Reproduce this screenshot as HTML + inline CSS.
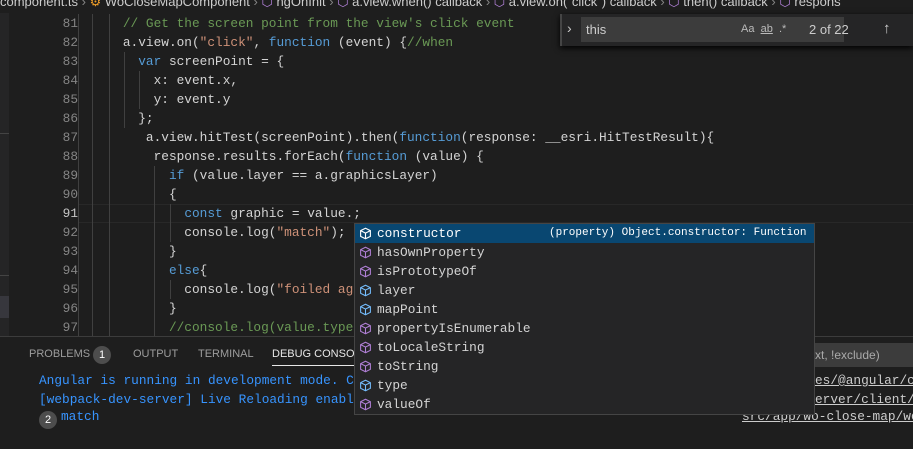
<!DOCTYPE html>
<html><head><meta charset="utf-8"><style>
*{margin:0;padding:0;box-sizing:border-box}
body{width:913px;height:449px;background:#1e1e1e;overflow:hidden;position:relative;font-family:"Liberation Sans",sans-serif;color:#d4d4d4}
.mono{font-family:"Liberation Mono",monospace;font-size:12.8px}
.a{position:absolute;white-space:pre}
.ln{position:absolute;left:38px;width:40px;text-align:right;color:#858585;font-family:"Liberation Mono",monospace;font-size:12.8px;line-height:19px}
.code{position:absolute;left:0;top:14px}
.code div{height:19px;line-height:19px;white-space:pre;font-family:"Liberation Mono",monospace;font-size:12.8px;color:#d4d4d4}
.k{color:#569cd6}.s{color:#ce9178}.c{color:#6a9955}.f{color:#dcdcaa}
.g{position:absolute;width:1px;background:#404040}
.sug{position:absolute;left:354px;top:223px;width:461px;height:192px;background:#252526;border:1px solid #454545}
.sug div{height:19px;line-height:19px;position:relative;padding-left:22px;font-family:"Liberation Mono",monospace;font-size:12.8px;color:#d4d4d4;white-space:nowrap}
.sug div.sel{background:#094771;color:#fff}
.ic{position:absolute;left:4px;top:3px;width:13px;height:13px}
</style></head><body>
<div class="a" style="left:0;top:0;width:913px;height:13px;background:#1e1e1e"></div>
<div class="a" style="left:0;top:-6px;font-size:13px;color:#ccc;">component.ts <span style="color:#888">›</span> <span style="color:#ee9d28">⚙</span> WoCloseMapComponent <span style="color:#888">›</span> <span style="color:#b180d7">⬡</span> ngOnInit <span style="color:#888">›</span> <span style="color:#b180d7">⬡</span> a.view.when() callback <span style="color:#888">›</span> <span style="color:#b180d7">⬡</span> a.view.on("click") callback <span style="color:#888">›</span> <span style="color:#b180d7">⬡</span> then() callback <span style="color:#888">›</span> <span style="color:#b180d7">⬡</span> respons</div>
<div class="a" style="left:0;top:13px;width:9px;height:323px;background:#252526"></div>
<div class="a" style="left:0;top:133px;width:9px;height:1px;background:#444"></div>
<div class="a" style="left:0;top:275px;width:9px;height:1px;background:#444"></div>
<div class="a" style="left:0;top:296px;width:9px;height:22px;background:#37373d"></div>
<div class="ln" style="top:14px">81<br>82<br>83<br>84<br>85<br>86<br>87<br>88<br>89<br>90<br><span style="color:#c6c6c6">91</span><br>92<br>93<br>94<br>95<br>96<br>97</div>
<div class="a" style="left:78px;top:204px;width:835px;height:19px;border-top:1px solid #282828;border-bottom:1px solid #282828"></div>
<div class="g" style="left:78px;top:14px;height:322px"></div>
<div class="g" style="left:92px;top:14px;height:322px"></div>
<div class="g" style="left:109px;top:14px;height:322px"></div>
<div class="g" style="left:124px;top:52px;height:76px"></div>
<div class="g" style="left:139px;top:71px;height:38px"></div>
<div class="g" style="left:154px;top:166px;height:170px"></div>
<div class="g" style="left:170px;top:204px;height:38px"></div>
<div class="g" style="left:170px;top:280px;height:19px"></div>
<div class="code">
<div>                <span class="c">// Get the screen point from the view's click event</span></div>
<div>                a.view.on(<span class="s">"click"</span>, <span class="k">function</span> (event) {<span class="c">//when</span></div>
<div>                  <span class="k">var</span> screenPoint = {</div>
<div>                    x: event.x,</div>
<div>                    y: event.y</div>
<div>                  };</div>
<div>                   a.view.hitTest(screenPoint).then(<span class="k">function</span>(response: __esri.HitTestResult){</div>
<div>                    response.results.forEach(<span class="k">function</span> (value) {</div>
<div>                      <span class="k">if</span> (value.layer == a.graphicsLayer)</div>
<div>                      {</div>
<div>                        <span class="k">const</span> graphic = value.;</div>
<div>                        console.log(<span class="s">"match"</span>);</div>
<div>                      }</div>
<div>                      <span class="k">else</span>{</div>
<div>                        console.log(<span class="s">"foiled ag</span></div>
<div>                      }</div>
<div>                      <span class="c">//console.log(value.type</span></div>
</div>
<div class="a" style="left:560px;top:14px;width:353px;height:32px;background:#252526;box-shadow:0 2px 6px #000;border-left:2px solid #454545"></div>
<div class="a" style="left:567px;top:20px;color:#ccc;font-size:14px">›</div>
<div class="a" style="left:581px;top:17px;width:263px;height:25px;background:#3c3c3c"></div>
<div class="a" style="left:586px;top:22px;color:#ccc;font-size:13px">this</div>
<div class="a" style="left:741px;top:23px;color:#bbb;font-size:11px">Aa&nbsp;&nbsp;<u>ab</u>&nbsp;&nbsp;.*</div>
<div class="a" style="left:809px;top:22px;color:#ccc;font-size:13px">2 of 22</div>
<div class="a" style="left:883px;top:20px;color:#ccc;font-size:15px">↑</div>
<div class="a" style="left:0;top:336px;width:913px;height:113px;background:#1e1e1e;border-top:1px solid #3c3c3c"></div>
<div class="a" style="left:29px;top:348px;font-size:11px;color:#9d9d9d">PROBLEMS</div>
<div class="a" style="left:93px;top:346px;width:18px;height:18px;border-radius:9px;background:#4d4d4d;color:#fff;font-size:11px;text-align:center;line-height:18px">1</div>
<div class="a" style="left:133px;top:348px;font-size:11px;color:#9d9d9d">OUTPUT</div>
<div class="a" style="left:198px;top:348px;font-size:11px;color:#9d9d9d">TERMINAL</div>
<div class="a" style="left:272px;top:348px;font-size:11px;color:#e7e7e7">DEBUG CONSOLE</div>
<div class="a" style="left:272px;top:365px;width:90px;height:1px;background:#e7e7e7"></div>
<div class="a" style="left:815px;top:343px;width:98px;height:24px;background:#3c3c3c;color:#aaa;font-size:12px;padding:5px 0 0 0">xt, !exclude)</div>
<div class="a mono" style="left:39px;top:371px;color:#3794ff;line-height:19px">Angular is running in development mode. C<br>[webpack-dev-server] Live Reloading enabl</div>
<div class="a" style="left:39px;top:411px;width:18px;height:18px;border-radius:9px;background:#4d4d4d;color:#fff;font-size:11px;text-align:center;line-height:18px">2</div>
<div class="a mono" style="left:61px;top:409px;color:#3794ff">match</div>
<div class="a mono" style="left:815px;top:371px;color:#ccc;line-height:19px;text-decoration:underline">es/@angular/co<br>erver/client/m</div>
<div class="a mono" style="left:742px;top:409px;color:#ccc;text-decoration:underline">src/app/wo-close-map/wo</div>
<div class="sug">
<div class="sel"><svg class="ic" viewBox="0 0 16 16"><path d="M8 1.5l6 3v7l-6 3-6-3v-7z M2 4.5l6 3 6-3 M8 7.5v7" fill="none" stroke="#fff" stroke-width="1.4"/></svg>constructor<span style="position:absolute;left:194px;font-size:11px">(property) Object.constructor: Function</span></div>
<div><svg class="ic" viewBox="0 0 16 16"><path d="M8 1.5l6 3v7l-6 3-6-3v-7z M2 4.5l6 3 6-3 M8 7.5v7" fill="none" stroke="#b180d7" stroke-width="1.3"/></svg>hasOwnProperty</div>
<div><svg class="ic" viewBox="0 0 16 16"><path d="M8 1.5l6 3v7l-6 3-6-3v-7z M2 4.5l6 3 6-3 M8 7.5v7" fill="none" stroke="#b180d7" stroke-width="1.3"/></svg>isPrototypeOf</div>
<div><svg class="ic" viewBox="0 0 16 16"><path d="M8 1.5l6 3v7l-6 3-6-3v-7z M2 4.5l6 3 6-3 M8 7.5v7" fill="none" stroke="#75beff" stroke-width="1.3"/></svg>layer</div>
<div><svg class="ic" viewBox="0 0 16 16"><path d="M8 1.5l6 3v7l-6 3-6-3v-7z M2 4.5l6 3 6-3 M8 7.5v7" fill="none" stroke="#75beff" stroke-width="1.3"/></svg>mapPoint</div>
<div><svg class="ic" viewBox="0 0 16 16"><path d="M8 1.5l6 3v7l-6 3-6-3v-7z M2 4.5l6 3 6-3 M8 7.5v7" fill="none" stroke="#b180d7" stroke-width="1.3"/></svg>propertyIsEnumerable</div>
<div><svg class="ic" viewBox="0 0 16 16"><path d="M8 1.5l6 3v7l-6 3-6-3v-7z M2 4.5l6 3 6-3 M8 7.5v7" fill="none" stroke="#b180d7" stroke-width="1.3"/></svg>toLocaleString</div>
<div><svg class="ic" viewBox="0 0 16 16"><path d="M8 1.5l6 3v7l-6 3-6-3v-7z M2 4.5l6 3 6-3 M8 7.5v7" fill="none" stroke="#b180d7" stroke-width="1.3"/></svg>toString</div>
<div><svg class="ic" viewBox="0 0 16 16"><path d="M8 1.5l6 3v7l-6 3-6-3v-7z M2 4.5l6 3 6-3 M8 7.5v7" fill="none" stroke="#75beff" stroke-width="1.3"/></svg>type</div>
<div><svg class="ic" viewBox="0 0 16 16"><path d="M8 1.5l6 3v7l-6 3-6-3v-7z M2 4.5l6 3 6-3 M8 7.5v7" fill="none" stroke="#b180d7" stroke-width="1.3"/></svg>valueOf</div>
</div>
</body></html>
